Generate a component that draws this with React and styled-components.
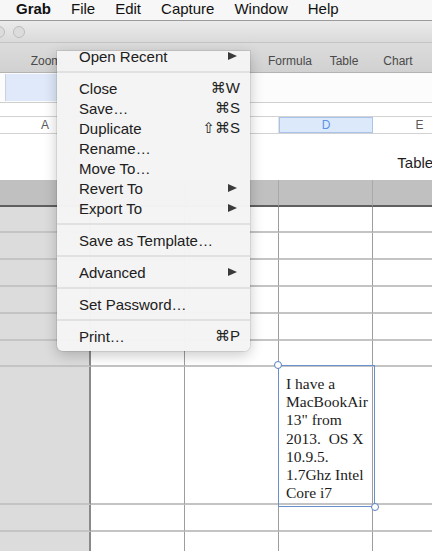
import React from "react";
import styled, { createGlobalStyle } from "styled-components";

const GlobalStyle = createGlobalStyle`
  html, body {
    margin: 0;
    padding: 0;
    width: 432px;
    height: 551px;
    overflow: hidden;
    background: #ffffff;
  }
  * {
    box-sizing: border-box;
  }
`;

const Page = styled.div`
  position: relative;
  width: 432px;
  height: 551px;
  overflow: hidden;
  font-family: "Liberation Sans", Arial, sans-serif;
  color: #1e1e1e;
`;

const MenuBar = styled.div`
  display: flex;
  align-items: flex-start;
  height: 21px;
  padding-left: 6px;
  background: #f7f7f7;
  border-bottom: 1px solid #9a9a9a;
`;

const MenuTitle = styled.span`
  padding: 0 10px;
  font-size: 15px;
  line-height: 17px;
  font-weight: ${(p) => (p.$bold ? 700 : 400)};
  color: #111;
  white-space: nowrap;
`;

const TitleBar = styled.div`
  display: flex;
  align-items: center;
  gap: 8px;
  height: 22px;
  margin-left: -7px;
  background: linear-gradient(#ebebeb, #dadada);
  border-bottom: 1px solid #c4c4c4;
`;

const Light = styled.span`
  width: 12px;
  height: 12px;
  border-radius: 50%;
  background: #dcdcdc;
  border: 1px solid #bdbdbd;
`;

const Toolbar = styled.div`
  display: flex;
  align-items: flex-end;
  height: 30px;
  padding: 0 7px 4px 19px;
  background: linear-gradient(#dcdcdc, #d1d1d1);
  border-bottom: 1px solid #b3b3b3;
`;

const ToolLabel = styled.span`
  width: 54px;
  text-align: center;
  font-size: 12px;
  line-height: 14px;
  color: #4a4a4a;
  white-space: nowrap;
`;

const ToolSpacer = styled.div`
  flex: 1;
`;

const FormatBar = styled.div`
  display: flex;
  height: 30px;
  padding: 1px 0 1px 5px;
  background: #fcfcfc;
  border-bottom: 1px solid #cfcfcf;
`;

const FormatField = styled.div`
  width: 140px;
  background: #dfe9f9;
  border-left: 1px solid #c9d3e0;
`;

const Gap = styled.div`
  height: 13px;
  background: #ffffff;
`;

const cols = "91px repeat(8, 94px)";

const ColumnHeader = styled.div`
  display: grid;
  grid-template-columns: ${cols};
  height: 18px;
  border-top: 1px solid #d2d2d2;
  border-bottom: 1px solid #d2d2d2;
`;

const ColLetter = styled.div`
  display: flex;
  align-items: center;
  justify-content: center;
  font-size: 12px;
  color: ${(p) => (p.$active ? "#5b93e6" : "#5a5a5a")};
  background: ${(p) => (p.$active ? "#dce9fb" : "#ffffff")};
  border: ${(p) => (p.$active ? "1px solid #a9c3ea" : "none")};
  border-right: ${(p) => (p.$active ? "1px solid #a9c3ea" : "1px solid #e2e2e2")};
`;

const Sheet = styled.div`
  width: 843px;
`;

const TableTitle = styled.div`
  height: 46px;
  padding-top: 20px;
  text-align: center;
  font-size: 15px;
  line-height: 18px;
  color: #1e1e1e;
`;

const Grid = styled.div`
  position: relative;
  display: grid;
  grid-template-columns: ${cols};
  grid-template-rows: 27px 26px 27px 27px 27px 27px 26px 138px 27px 27px;
`;

const Cell = styled.div`
  background: ${(p) => (p.$header ? "#c0c0c0" : p.$side ? "#dcdcdc" : "#ffffff")};
  border-bottom: ${(p) => (p.$header ? "2px solid #5f5f5f" : "2px solid #c4c4c4")};
  border-right: ${(p) =>
    p.$side ? "2px solid #8a8a8a" : p.$header ? "1px solid #a9a9a9" : "1px solid #9d9d9d"};
`;

const TextBox = styled.div`
  position: absolute;
  left: 278px;
  top: 185px;
  width: 97px;
  height: 142px;
  padding: 9px 0 0 7px;
  border: 1px solid #6a8fcf;
  font-family: "Liberation Serif", "Times New Roman", serif;
  font-size: 15.5px;
  line-height: 18.2px;
  color: #1c1c1c;
  white-space: pre;
`;

const Handle = styled.span`
  position: absolute;
  width: 8px;
  height: 8px;
  border-radius: 50%;
  background: #ffffff;
  border: 1.3px solid #5a7fc4;
  ${(p) => (p.$end ? "right: -5px; bottom: -5px;" : "left: -5px; top: -5px;")}
`;

const Line = styled.span`
  display: block;
`;

const FileMenu = styled.div`
  position: absolute;
  left: 57px;
  top: 51px;
  width: 193px;
  height: 300px;
  overflow: hidden;
  background: rgba(244, 244, 244, 0.98);
  border-radius: 0 0 6px 6px;
  box-shadow: 0 4px 14px rgba(0, 0, 0, 0.22), 0 0 0 1px rgba(0, 0, 0, 0.08);
`;

const MenuList = styled.div`
  display: flex;
  flex-direction: column;
  margin-top: -5px;
`;

const Item = styled.div`
  display: flex;
  align-items: center;
  height: 20px;
  padding: 0 10px 0 22px;
  font-size: 15px;
  color: #202020;
  white-space: nowrap;
`;

const ItemLabel = styled.span`
  flex: 1;
`;

const Shortcut = styled.span`
  font-family: "Liberation Sans", "DejaVu Sans", sans-serif;
  font-size: 15px;
  color: #222;
`;

const Arrow = styled.span`
  width: 0;
  height: 0;
  margin-right: 3px;
  border-left: 9px solid #3a3a3a;
  border-top: 4.5px solid transparent;
  border-bottom: 4.5px solid transparent;
`;

const Separator = styled.div`
  height: 12px;
  display: flex;
  align-items: center;
  &::after {
    content: "";
    flex: 1;
    height: 2px;
    background: #e1e1e1;
  }
`;

const menuItems = [
  { label: "Open Recent", sub: true },
  "sep",
  { label: "Close", key: "⌘W" },
  { label: "Save…", key: "⌘S" },
  { label: "Duplicate", key: "⇧⌘S" },
  { label: "Rename…" },
  { label: "Move To…" },
  { label: "Revert To", sub: true },
  { label: "Export To", sub: true },
  "sep",
  { label: "Save as Template…" },
  "sep",
  { label: "Advanced", sub: true },
  "sep",
  { label: "Set Password…" },
  "sep",
  { label: "Print…", key: "⌘P" },
];

// only A–E are in view, the rest of the columns run off to the right
const letters = ["A", "B", "C", "D", "E", "", "", "", ""];
const rowCount = 10;

const noteLines = [
  "I have a",
  "MacBookAir",
  '13" from',
  "2013.  OS X",
  "10.9.5.",
  "1.7Ghz Intel",
  "Core i7",
];

export default function App() {
  const cells = [];
  for (let r = 0; r < rowCount; r++) {
    for (let c = 0; c < letters.length; c++) {
      cells.push(<Cell key={`${r}-${c}`} $header={r === 0} $side={c === 0} />);
    }
  }

  return (
    <>
      <GlobalStyle />
      <Page>
        <MenuBar>
          <MenuTitle $bold>Grab</MenuTitle>
          <MenuTitle>File</MenuTitle>
          <MenuTitle>Edit</MenuTitle>
          <MenuTitle>Capture</MenuTitle>
          <MenuTitle>Window</MenuTitle>
          <MenuTitle>Help</MenuTitle>
        </MenuBar>

        <TitleBar>
          <Light />
          <Light />
        </TitleBar>

        <Toolbar>
          <ToolLabel>Zoom</ToolLabel>
          <ToolSpacer />
          <ToolLabel>Formula</ToolLabel>
          <ToolLabel>Table</ToolLabel>
          <ToolLabel>Chart</ToolLabel>
        </Toolbar>

        <FormatBar>
          <FormatField />
        </FormatBar>
        <Gap />

        <ColumnHeader>
          {letters.map((l, i) => (
            <ColLetter key={i} $active={l === "D"}>
              {l}
            </ColLetter>
          ))}
        </ColumnHeader>

        <Sheet>
          <TableTitle>Table 1</TableTitle>
          <Grid>
            {cells}
            <TextBox>
              {noteLines.map((t) => (
                <Line key={t}>{t}</Line>
              ))}
              <Handle />
              <Handle $end />
            </TextBox>
          </Grid>
        </Sheet>

        <FileMenu>
          <MenuList>
            {menuItems.map((it, i) =>
              it === "sep" ? (
                <Separator key={i} />
              ) : (
                <Item key={i}>
                  <ItemLabel>{it.label}</ItemLabel>
                  {it.key && <Shortcut>{it.key}</Shortcut>}
                  {it.sub && <Arrow />}
                </Item>
              )
            )}
          </MenuList>
        </FileMenu>
      </Page>
    </>
  );
}
